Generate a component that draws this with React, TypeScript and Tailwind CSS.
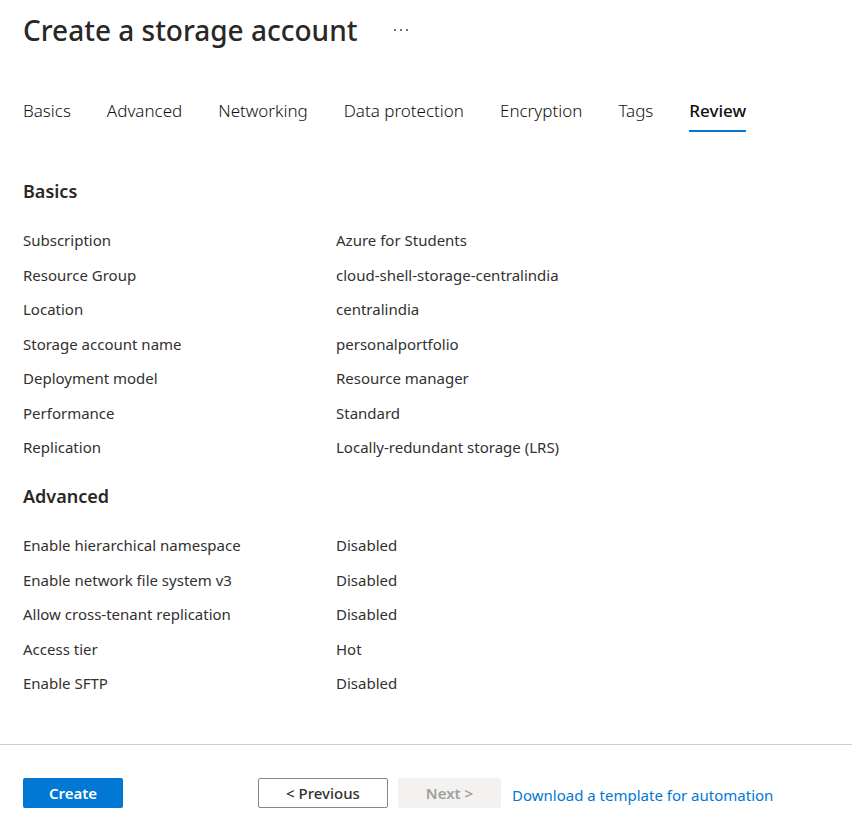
type Row = { label: string; value: string };

const tabs = ["Basics", "Advanced", "Networking", "Data protection", "Encryption", "Tags", "Review"];

const basics: Row[] = [
    { label: "Subscription", value: "Azure for Students" },
    { label: "Resource Group", value: "cloud-shell-storage-centralindia" },
    { label: "Location", value: "centralindia" },
    { label: "Storage account name", value: "personalportfolio" },
    { label: "Deployment model", value: "Resource manager" },
    { label: "Performance", value: "Standard" },
    { label: "Replication", value: "Locally-redundant storage (LRS)" },
];

const advanced: Row[] = [
    { label: "Enable hierarchical namespace", value: "Disabled" },
    { label: "Enable network file system v3", value: "Disabled" },
    { label: "Allow cross-tenant replication", value: "Disabled" },
    { label: "Access tier", value: "Hot" },
    { label: "Enable SFTP", value: "Disabled" },
];

function Section({ title, rows }: { title: string; rows: Row[] }) {
    return (
        <section>
            <h2 className="text-[18px] leading-6 font-semibold text-[#292827]">{title}</h2>
            <table className="mt-5 w-full text-left text-[15px] leading-5 text-[#323130]">
                <tbody>
                    {rows.map((row) => (
                        <tr key={row.label} className="align-middle odd:h-[34px] even:h-[35px]">
                            <th scope="row" className="w-[313px] p-0 font-normal">{row.label}</th>
                            <td className="p-0">{row.value}</td>
                        </tr>
                    ))}
                </tbody>
            </table>
        </section>
    );
}

export default function App() {
    return (
        <div className="min-h-screen bg-white font-['Segoe_UI','Noto_Sans',sans-serif] text-[#323130]">
            <header className="flex items-center gap-9 px-[23px] pt-3">
                <h1 className="text-[28px] leading-9 font-medium text-[#292827]">Create a storage account</h1>
                <button type="button" aria-label="More" className="flex h-6 w-4 items-center justify-center">
                    <svg width="14" height="2" viewBox="0 0 14 2" fill="#323130">
                        <circle cx="1" cy="1" r="0.9" />
                        <circle cx="7" cy="1" r="0.9" />
                        <circle cx="13" cy="1" r="0.9" />
                    </svg>
                </button>
            </header>

            <nav role="tablist" className="mt-[51px] flex gap-9 px-[23px] text-[17px] leading-6 font-light whitespace-nowrap text-[#11100f]">
                {tabs.map((tab) => (
                    <button
                        key={tab}
                        type="button"
                        role="tab"
                        aria-selected={tab === "Review"}
                        className="border-b-2 border-transparent pb-[7px] aria-selected:border-[#0078d4] aria-selected:font-medium"
                    >
                        {tab}
                    </button>
                ))}
            </nav>

            <main className="flex flex-col gap-5 px-[23px] pt-[47px] pb-11">
                <Section title="Basics" rows={basics} />
                <Section title="Advanced" rows={advanced} />
            </main>

            <footer className="flex items-center border-t border-[#d2d0ce] px-[23px] pt-[33px] pb-6 text-[15px] leading-5">
                <button type="button" className="h-[30px] w-[100px] rounded-xs bg-[#0078d4] font-semibold text-white">
                    Create
                </button>
                <button type="button" className="ml-[135px] h-[30px] w-[130px] rounded-xs border border-[#8a8886] font-medium">
                    &lt; Previous
                </button>
                <button type="button" disabled className="ml-[10px] h-[30px] w-[103px] rounded-xs bg-[#f3f2f1] font-semibold text-[#a19f9d]">
                    Next &gt;
                </button>
                <a href="#" className="mt-1 ml-[11px] text-[#0078d4]">Download a template for automation</a>
            </footer>
        </div>
    );
}
